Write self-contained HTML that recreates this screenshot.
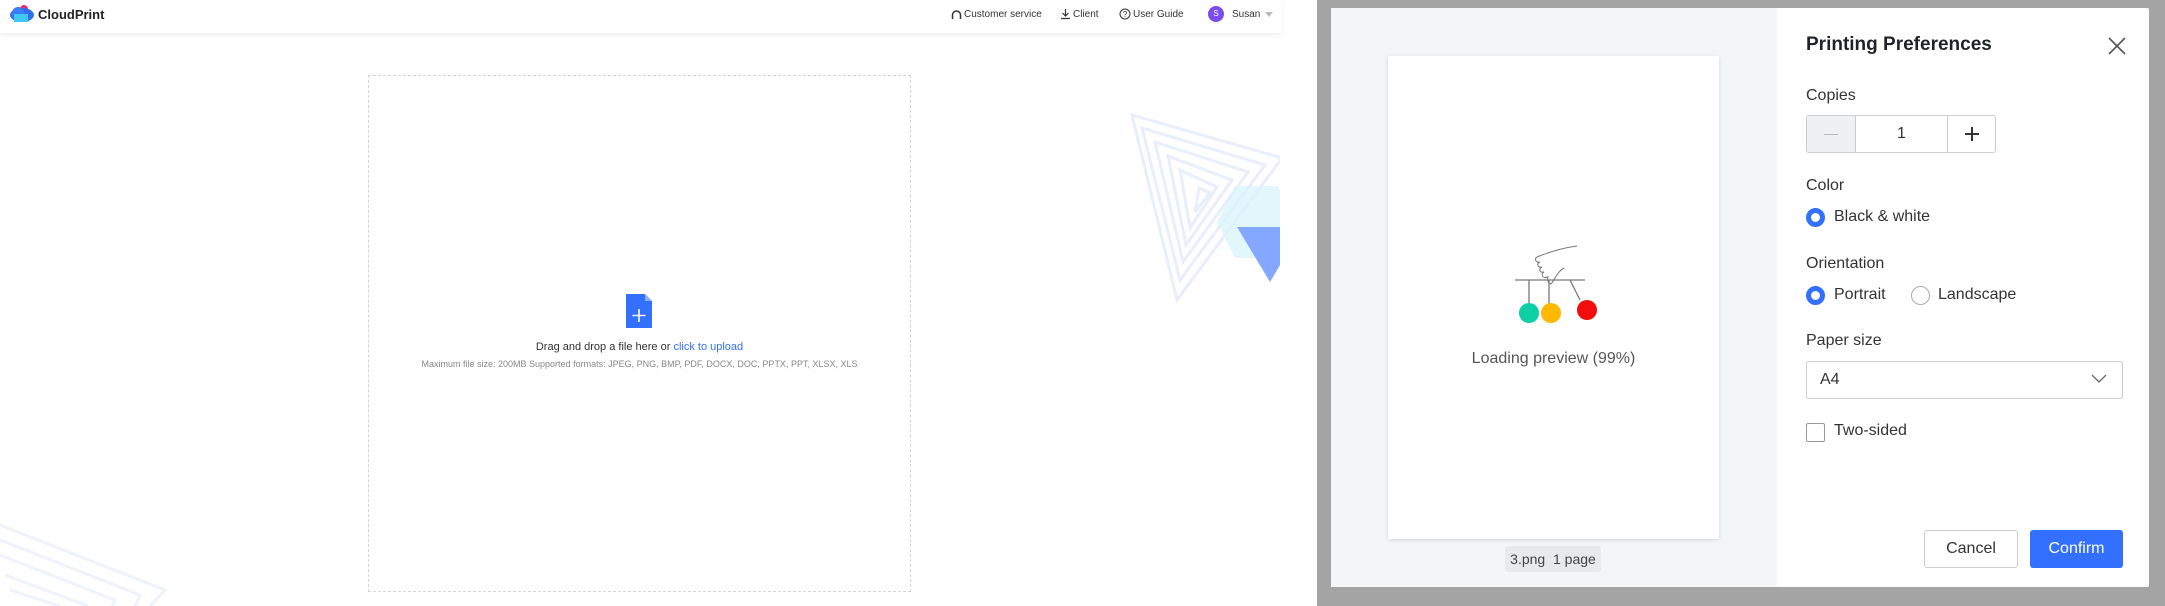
<!DOCTYPE html>
<html><head><meta charset="utf-8"><style>
*{margin:0;padding:0;box-sizing:border-box}
html,body{width:2165px;height:606px;overflow:hidden}
body{background:#fff;font-family:"Liberation Sans",sans-serif;position:relative}
.abs{position:absolute}
.hdr{left:0;top:0;width:1282px;height:33px;background:#fff;box-shadow:0 2px 4px rgba(0,0,0,.07)}
.hi{position:absolute;top:8px;font-size:10px;color:#333;white-space:nowrap;line-height:14px}
.lbl{position:absolute;left:1806px;font-size:16px;color:#333;white-space:nowrap}
.radio{position:absolute;width:19px;height:19px;border-radius:50%}
.on{border:5px solid #3370ff;background:#fff}
.off{border:1px solid #aaa;background:#fff}
</style></head><body>
<div class="abs hdr"></div>
<svg class="abs" style="left:8px;top:4px" width="28" height="20" viewBox="0 0 28 20">
<circle cx="16" cy="5" r="4" fill="#e0307a"/>
<ellipse cx="14" cy="11" rx="12" ry="7" fill="#2f6ff0"/>
<circle cx="10" cy="9" r="6" fill="#3b7cf5"/>
<rect x="6" y="10" width="14" height="8" fill="#3fc8f5"/>
</svg>
<div class="abs" style="left:38px;top:7px;font-size:13px;font-weight:bold;color:#222">CloudPrint</div>
<svg class="abs" style="left:951px;top:9px" width="11" height="11" viewBox="0 0 11 11"><path d="M1.5 10V6a4 4 0 0 1 8 0v4" fill="none" stroke="#333" stroke-width="1.5"/></svg>
<div class="hi" style="left:964px">Customer service</div>
<svg class="abs" style="left:1060px;top:8px" width="11" height="12" viewBox="0 0 11 12"><path d="M5.5 1v7M2.5 5l3 3 3-3M1 10.5h9" fill="none" stroke="#333" stroke-width="1.2"/></svg>
<div class="hi" style="left:1073px">Client</div>
<svg class="abs" style="left:1119px;top:8px" width="12" height="12" viewBox="0 0 12 12"><circle cx="6" cy="6" r="5" fill="none" stroke="#333"/><text x="6" y="9" font-size="8" text-anchor="middle" fill="#333" font-family="Liberation Sans">?</text></svg>
<div class="hi" style="left:1133px">User Guide</div>
<div class="abs" style="left:1208px;top:6px;width:16px;height:16px;border-radius:50%;background:#7c4dee;color:#fff;font-size:8px;text-align:center;line-height:16px">S</div>
<div class="hi" style="left:1232px">Susan</div>
<div class="abs" style="left:1265px;top:12px;border-left:4px solid transparent;border-right:4px solid transparent;border-top:5px solid #bbb"></div>

<div class="abs" style="left:368px;top:75px;width:543px;height:517px;border:1px dashed #d4d4d4"></div>
<svg class="abs" style="left:626px;top:294px" width="26" height="34" viewBox="0 0 26 34"><path d="M0 0H19L26 7V34H0Z" fill="#3370ff"/><path d="M19 0V7H26" fill="#8fb0ff"/><path d="M13 15v13M6.5 21.5h13" stroke="#fff" stroke-width="1.6"/></svg>
<div class="abs" style="left:368px;width:543px;top:341px;text-align:center;font-size:11px;color:#333">Drag and drop a file here or <span style="color:#3370ff">click to upload</span></div>
<div class="abs" style="left:368px;width:543px;top:359px;text-align:center;font-size:9px;color:#888">Maximum file size: 200MB Supported formats: JPEG, PNG, BMP, PDF, DOCX, DOC, PPTX, PPT, XLSX, XLS</div>

<svg class="abs" style="left:1130px;top:100px" width="150" height="210" viewBox="1130 100 150 210">
<g fill="none" stroke="#e8eefc" stroke-width="3">
<path d="M1132 115L1282 158L1177 300Z"/><path d="M1142 128L1265 165L1180 280Z"/><path d="M1155 142L1248 172L1183 262Z"/><path d="M1168 156L1232 180L1186 245Z"/><path d="M1180 170L1217 187L1190 228Z"/><path d="M1199 188L1210 193L1195 212Z"/>
</g>
<path d="M1235 186H1278L1296 222L1278 258H1235L1217 222Z" fill="#d8f4fb" opacity=".75"/>
<path d="M1237 227H1280V265L1270 282Z" fill="#84a8ff"/>
</svg>
<svg class="abs" style="left:0;top:510px" width="170" height="96" viewBox="0 510 170 96">
<g fill="none" stroke="#eef2fd" stroke-width="3">
<path d="M0 525L165 590L150 606"/><path d="M0 540L140 595L135 606"/><path d="M0 555L115 600L112 606"/><path d="M5 575L88 606"/><path d="M10 590L60 606"/>
</g></svg>

<div class="abs" style="left:1317px;top:0;width:848px;height:606px;background:#a4a4a4"></div>
<div class="abs" style="left:1331px;top:8px;width:818px;height:579px;background:#fff;border-radius:2px"></div>
<div class="abs" style="left:1331px;top:8px;width:446px;height:579px;background:#f4f5f7"></div>
<div class="abs" style="left:1388px;top:56px;width:331px;height:483px;background:#fff;box-shadow:0 1px 4px rgba(0,0,0,.12)"></div>
<svg class="abs" style="left:1510px;top:232px" width="95" height="98" viewBox="1510 232 95 98">
<path d="M1537 257c12-5 25-9 40-11M1537 257c-3 2-1 6 3 5c-4 2-2 6 2 5c-4 2-2 6 2 5c-4 3-1 7 4 5c-1 3 0 6 3 7c4-5 7-13 13-16" fill="none" stroke="#777" stroke-width="1"/>
<path d="M1515 280H1585M1529 280V304M1549 280V304M1570 280L1580 300" stroke="#777" stroke-width="1.3" fill="none"/>
<circle cx="1529" cy="313" r="10" fill="#0ccfa6"/><circle cx="1551" cy="313" r="10" fill="#ffb800"/><circle cx="1587" cy="310" r="10" fill="#f50c0c"/>
</svg>
<div class="abs" style="left:1388px;width:331px;top:350px;text-align:center;font-size:16px;color:#555">Loading preview (99%)</div>
<div class="abs" style="left:1505px;top:546px;width:96px;height:26px;background:#e8e9eb;border-radius:3px;font-size:14px;color:#444;text-align:center;line-height:26px">3.png&nbsp; 1 page</div>

<div class="abs" style="left:1806px;top:34px;font-size:19px;font-weight:bold;color:#1f2329">Printing Preferences</div>
<svg class="abs" style="left:2108px;top:37px" width="18" height="18" viewBox="0 0 18 18"><path d="M1 1L17 17M17 1L1 17" stroke="#555" stroke-width="1.6"/></svg>
<div class="lbl" style="top:87px">Copies</div>
<div class="abs" style="left:1806px;top:115px;width:190px;height:38px;border:1px solid #ccc;border-radius:3px;overflow:hidden">
<div class="abs" style="left:0;top:0;width:49px;height:36px;background:#eef0f3;border-right:1px solid #ccc"></div>
<div class="abs" style="left:17px;top:18px;width:14px;height:1px;background:#bbb"></div>
<div class="abs" style="left:49px;top:0;width:91px;height:36px;text-align:center;line-height:36px;font-size:16px;color:#333">1</div>
<div class="abs" style="left:140px;top:0;width:1px;height:36px;background:#ccc"></div>
<div class="abs" style="left:158px;top:17px;width:14px;height:1.6px;background:#333"></div>
<div class="abs" style="left:164px;top:11px;width:1.6px;height:14px;background:#333"></div>
</div>
<div class="lbl" style="top:177px">Color</div>
<div class="radio on" style="left:1806px;top:208px"></div>
<div class="lbl" style="left:1834px;top:208px">Black &amp; white</div>
<div class="lbl" style="top:255px">Orientation</div>
<div class="radio on" style="left:1806px;top:286px"></div>
<div class="lbl" style="left:1834px;top:286px">Portrait</div>
<div class="radio off" style="left:1911px;top:286px"></div>
<div class="lbl" style="left:1938px;top:286px">Landscape</div>
<div class="lbl" style="top:332px">Paper size</div>
<div class="abs" style="left:1806px;top:361px;width:317px;height:38px;border:1px solid #ccc;border-radius:3px"></div>
<div class="lbl" style="left:1820px;top:371px">A4</div>
<svg class="abs" style="left:2091px;top:374px" width="16" height="10" viewBox="0 0 16 10"><path d="M1 1L8 8L15 1" fill="none" stroke="#666" stroke-width="1.3"/></svg>
<div class="abs" style="left:1806px;top:423px;width:19px;height:19px;border:1px solid #999;border-radius:2px"></div>
<div class="lbl" style="left:1834px;top:422px">Two-sided</div>
<div class="abs" style="left:1924px;top:530px;width:94px;height:38px;border:1px solid #ccc;border-radius:3px;text-align:center;line-height:36px;font-size:16px;color:#333">Cancel</div>
<div class="abs" style="left:2030px;top:530px;width:93px;height:38px;background:#3370ff;border-radius:3px;text-align:center;line-height:38px;font-size:16px;color:#fff">Confirm</div>
</body></html>
